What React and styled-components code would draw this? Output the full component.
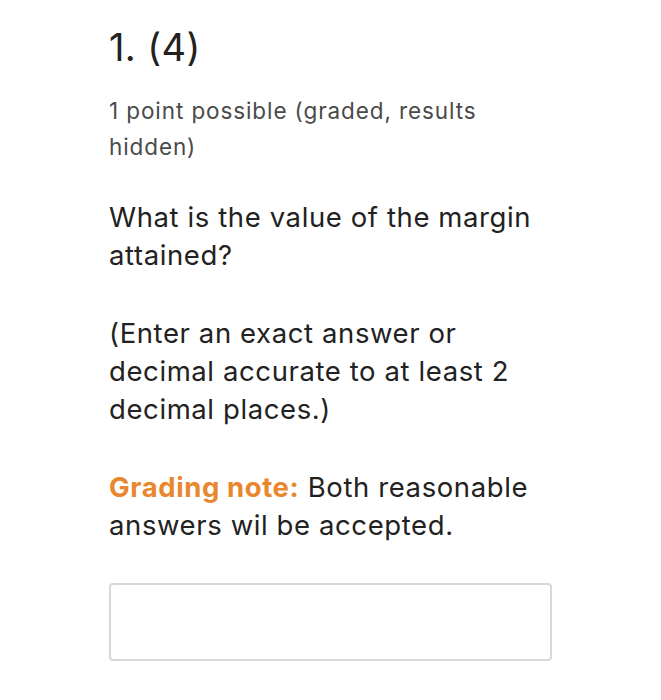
import React from "react";
import styled, { createGlobalStyle } from "styled-components";

const Global = createGlobalStyle`
  html, body { margin: 0; padding: 0; background: #fff; }
  body { font-family: Inter, "Noto Sans", sans-serif; color: #222; }
`;

const Page = styled.div`
  width: 661px;
  padding: 25px 0 0 109px;
  box-sizing: border-box;
`;

const Content = styled.div`
  width: 443px;
`;

const Title = styled.h1`
  margin: 0;
  font-size: 38px;
  font-weight: 400;
  line-height: 44px;
  letter-spacing: 0.4px;
  color: #222;
`;

const Meta = styled.p`
  margin: 24px 0 0;
  font-size: 22.5px;
  line-height: 36px;
  letter-spacing: 0.9px;
  color: #4a4a4a;
  width: 410px;
`;

const Body = styled.p`
  margin: ${(p) => p.$top}px 0 0;
  font-size: 27.5px;
  line-height: 38px;
  letter-spacing: 0.6px;
  color: #222;
`;

const Note = styled.span`
  color: #e8872d;
  font-weight: 700;
`;

const Input = styled.input`
  display: block;
  margin-top: 39px;
  width: 443px;
  height: 78px;
  box-sizing: border-box;
  border: 2px solid #d8d8d8;
  border-radius: 4px;
  background: #fff;
  outline: none;
`;

export default function App() {
  return (
    <>
      <Global />
      <Page>
        <Content>
          <Title>1. (4)</Title>
          <Meta>1 point possible (graded, results hidden)</Meta>
          <Body $top={33}>What is the value of the margin attained?</Body>
          <Body $top={40}>(Enter an exact answer or decimal accurate to at least 2 decimal places.)</Body>
          <Body $top={40}>
            <Note>Grading note:</Note> Both reasonable answers wil be accepted.
          </Body>
          <Input type="text" />
        </Content>
      </Page>
    </>
  );
}
